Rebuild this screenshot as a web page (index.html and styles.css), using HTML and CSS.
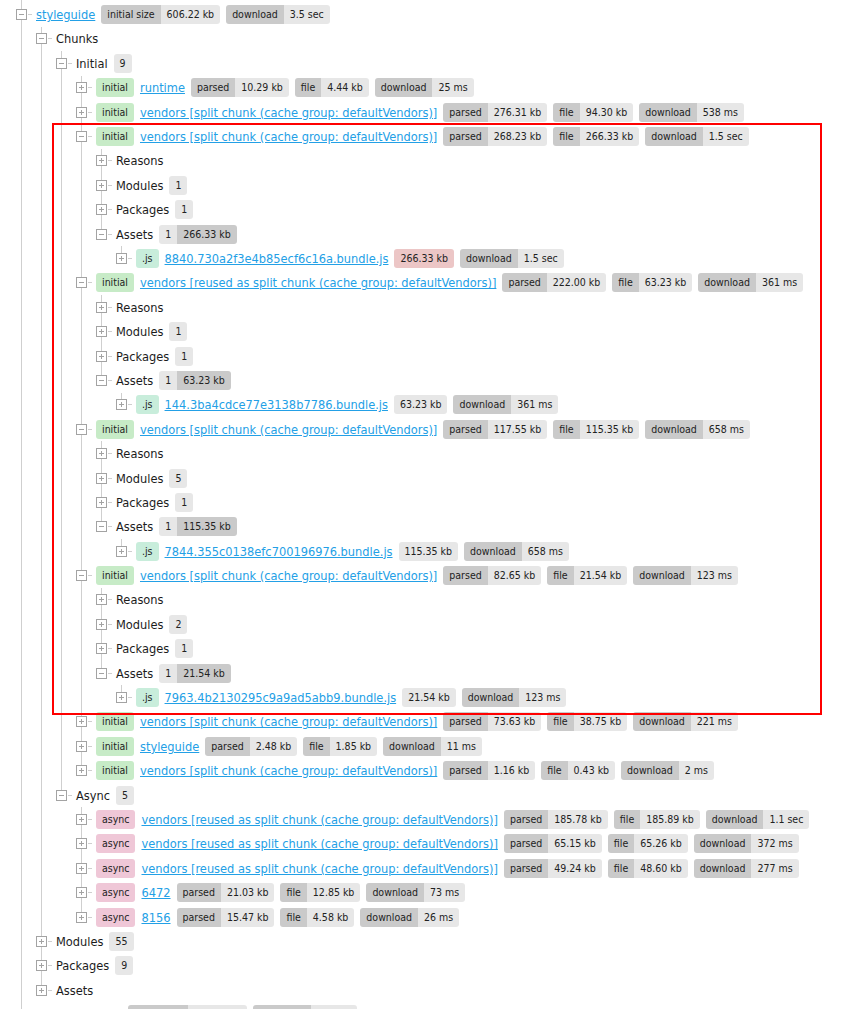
FILE: index.html
```html
<!DOCTYPE html>
<html lang="en">
<head>
    <meta charset="UTF-8">
    <meta name="viewport" content="width=device-width, initial-scale=1.0">
    <title>Statoscope - styleguide</title>
    <link rel="stylesheet" href="styles.css">
</head>
<body>
    <ul class="tree">
        <li>
            <div class="row"><span class="toggle open"></span><span class="dash"></span>
                <div class="cells">
                    <a href="#">styleguide</a>
                    <span class="badge"><span class="k">initial size</span><span class="v">606.22 kb</span></span>
                    <span class="badge"><span class="k">download</span><span class="v">3.5 sec</span></span>
                </div>
            </div>
            <ul>
                <li>
                    <div class="row"><span class="toggle open"></span><span class="dash"></span>
                        <div class="cells"><span class="label">Chunks</span></div>
                    </div>
                    <ul>
                        <li>
                            <div class="row"><span class="toggle open"></span><span class="dash"></span>
                                <div class="cells">
                                    <span class="label">Initial</span>
                                    <span class="badge"><span class="v">9</span></span>
                                </div>
                            </div>
                            <ul>
                                <li>
                                    <div class="row"><span class="toggle"></span><span class="dash"></span>
                                        <div class="cells">
                                            <span class="tag initial">initial</span>
                                            <a href="#">runtime</a>
                                            <span class="badge"><span class="k">parsed</span><span class="v">10.29 kb</span></span>
                                            <span class="badge"><span class="k">file</span><span class="v">4.44 kb</span></span>
                                            <span class="badge"><span class="k">download</span><span class="v">25 ms</span></span>
                                        </div>
                                    </div>
                                </li>
                                <li>
                                    <div class="row"><span class="toggle"></span><span class="dash"></span>
                                        <div class="cells">
                                            <span class="tag initial">initial</span>
                                            <a href="#">vendors [split chunk (cache group: defaultVendors)]</a>
                                            <span class="badge"><span class="k">parsed</span><span class="v">276.31 kb</span></span>
                                            <span class="badge"><span class="k">file</span><span class="v">94.30 kb</span></span>
                                            <span class="badge"><span class="k">download</span><span class="v">538 ms</span></span>
                                        </div>
                                    </div>
                                </li>
                                <li>
                                    <div class="row"><span class="toggle open"></span><span class="dash"></span>
                                        <div class="cells">
                                            <span class="tag initial">initial</span>
                                            <a href="#">vendors [split chunk (cache group: defaultVendors)]</a>
                                            <span class="badge"><span class="k">parsed</span><span class="v">268.23 kb</span></span>
                                            <span class="badge"><span class="k">file</span><span class="v">266.33 kb</span></span>
                                            <span class="badge"><span class="k">download</span><span class="v">1.5 sec</span></span>
                                        </div>
                                    </div>
                                    <ul>
                                        <li><div class="row"><span class="toggle"></span><span class="dash"></span><div class="cells"><span class="label">Reasons</span></div></div></li>
                                        <li><div class="row"><span class="toggle"></span><span class="dash"></span><div class="cells"><span class="label">Modules</span><span class="badge"><span class="v">1</span></span></div></div></li>
                                        <li><div class="row"><span class="toggle"></span><span class="dash"></span><div class="cells"><span class="label">Packages</span><span class="badge"><span class="v">1</span></span></div></div></li>
                                        <li>
                                            <div class="row"><span class="toggle open"></span><span class="dash"></span>
                                                <div class="cells">
                                                    <span class="label">Assets</span>
                                                    <span class="badge"><span class="v">1</span><span class="k">266.33 kb</span></span>
                                                </div>
                                            </div>
                                            <ul>
                                                <li>
                                                    <div class="row"><span class="toggle"></span><span class="dash"></span>
                                                        <div class="cells">
                                                            <span class="tag js">.js</span>
                                                            <a href="#">8840.730a2f3e4b85ecf6c16a.bundle.js</a>
                                                            <span class="badge"><span class="v alarm">266.33 kb</span></span>
                                                            <span class="badge"><span class="k">download</span><span class="v">1.5 sec</span></span>
                                                        </div>
                                                    </div>
                                                </li>
                                            </ul>
                                        </li>
                                    </ul>
                                </li>
                                <li>
                                    <div class="row"><span class="toggle open"></span><span class="dash"></span>
                                        <div class="cells">
                                            <span class="tag initial">initial</span>
                                            <a href="#">vendors [reused as split chunk (cache group: defaultVendors)]</a>
                                            <span class="badge"><span class="k">parsed</span><span class="v">222.00 kb</span></span>
                                            <span class="badge"><span class="k">file</span><span class="v">63.23 kb</span></span>
                                            <span class="badge"><span class="k">download</span><span class="v">361 ms</span></span>
                                        </div>
                                    </div>
                                    <ul>
                                        <li><div class="row"><span class="toggle"></span><span class="dash"></span><div class="cells"><span class="label">Reasons</span></div></div></li>
                                        <li><div class="row"><span class="toggle"></span><span class="dash"></span><div class="cells"><span class="label">Modules</span><span class="badge"><span class="v">1</span></span></div></div></li>
                                        <li><div class="row"><span class="toggle"></span><span class="dash"></span><div class="cells"><span class="label">Packages</span><span class="badge"><span class="v">1</span></span></div></div></li>
                                        <li>
                                            <div class="row"><span class="toggle open"></span><span class="dash"></span>
                                                <div class="cells">
                                                    <span class="label">Assets</span>
                                                    <span class="badge"><span class="v">1</span><span class="k">63.23 kb</span></span>
                                                </div>
                                            </div>
                                            <ul>
                                                <li>
                                                    <div class="row"><span class="toggle"></span><span class="dash"></span>
                                                        <div class="cells">
                                                            <span class="tag js">.js</span>
                                                            <a href="#">144.3ba4cdce77e3138b7786.bundle.js</a>
                                                            <span class="badge"><span class="v">63.23 kb</span></span>
                                                            <span class="badge"><span class="k">download</span><span class="v">361 ms</span></span>
                                                        </div>
                                                    </div>
                                                </li>
                                            </ul>
                                        </li>
                                    </ul>
                                </li>
                                <li>
                                    <div class="row"><span class="toggle open"></span><span class="dash"></span>
                                        <div class="cells">
                                            <span class="tag initial">initial</span>
                                            <a href="#">vendors [split chunk (cache group: defaultVendors)]</a>
                                            <span class="badge"><span class="k">parsed</span><span class="v">117.55 kb</span></span>
                                            <span class="badge"><span class="k">file</span><span class="v">115.35 kb</span></span>
                                            <span class="badge"><span class="k">download</span><span class="v">658 ms</span></span>
                                        </div>
                                    </div>
                                    <ul>
                                        <li><div class="row"><span class="toggle"></span><span class="dash"></span><div class="cells"><span class="label">Reasons</span></div></div></li>
                                        <li><div class="row"><span class="toggle"></span><span class="dash"></span><div class="cells"><span class="label">Modules</span><span class="badge"><span class="v">5</span></span></div></div></li>
                                        <li><div class="row"><span class="toggle"></span><span class="dash"></span><div class="cells"><span class="label">Packages</span><span class="badge"><span class="v">1</span></span></div></div></li>
                                        <li>
                                            <div class="row"><span class="toggle open"></span><span class="dash"></span>
                                                <div class="cells">
                                                    <span class="label">Assets</span>
                                                    <span class="badge"><span class="v">1</span><span class="k">115.35 kb</span></span>
                                                </div>
                                            </div>
                                            <ul>
                                                <li>
                                                    <div class="row"><span class="toggle"></span><span class="dash"></span>
                                                        <div class="cells">
                                                            <span class="tag js">.js</span>
                                                            <a href="#">7844.355c0138efc700196976.bundle.js</a>
                                                            <span class="badge"><span class="v">115.35 kb</span></span>
                                                            <span class="badge"><span class="k">download</span><span class="v">658 ms</span></span>
                                                        </div>
                                                    </div>
                                                </li>
                                            </ul>
                                        </li>
                                    </ul>
                                </li>
                                <li>
                                    <div class="row"><span class="toggle open"></span><span class="dash"></span>
                                        <div class="cells">
                                            <span class="tag initial">initial</span>
                                            <a href="#">vendors [split chunk (cache group: defaultVendors)]</a>
                                            <span class="badge"><span class="k">parsed</span><span class="v">82.65 kb</span></span>
                                            <span class="badge"><span class="k">file</span><span class="v">21.54 kb</span></span>
                                            <span class="badge"><span class="k">download</span><span class="v">123 ms</span></span>
                                        </div>
                                    </div>
                                    <ul>
                                        <li><div class="row"><span class="toggle"></span><span class="dash"></span><div class="cells"><span class="label">Reasons</span></div></div></li>
                                        <li><div class="row"><span class="toggle"></span><span class="dash"></span><div class="cells"><span class="label">Modules</span><span class="badge"><span class="v">2</span></span></div></div></li>
                                        <li><div class="row"><span class="toggle"></span><span class="dash"></span><div class="cells"><span class="label">Packages</span><span class="badge"><span class="v">1</span></span></div></div></li>
                                        <li>
                                            <div class="row"><span class="toggle open"></span><span class="dash"></span>
                                                <div class="cells">
                                                    <span class="label">Assets</span>
                                                    <span class="badge"><span class="v">1</span><span class="k">21.54 kb</span></span>
                                                </div>
                                            </div>
                                            <ul>
                                                <li>
                                                    <div class="row"><span class="toggle"></span><span class="dash"></span>
                                                        <div class="cells">
                                                            <span class="tag js">.js</span>
                                                            <a href="#">7963.4b2130295c9a9ad5abb9.bundle.js</a>
                                                            <span class="badge"><span class="v">21.54 kb</span></span>
                                                            <span class="badge"><span class="k">download</span><span class="v">123 ms</span></span>
                                                        </div>
                                                    </div>
                                                </li>
                                            </ul>
                                        </li>
                                    </ul>
                                </li>
                                <li>
                                    <div class="row"><span class="toggle"></span><span class="dash"></span>
                                        <div class="cells">
                                            <span class="tag initial">initial</span>
                                            <a href="#">vendors [split chunk (cache group: defaultVendors)]</a>
                                            <span class="badge"><span class="k">parsed</span><span class="v">73.63 kb</span></span>
                                            <span class="badge"><span class="k">file</span><span class="v">38.75 kb</span></span>
                                            <span class="badge"><span class="k">download</span><span class="v">221 ms</span></span>
                                        </div>
                                    </div>
                                </li>
                                <li>
                                    <div class="row"><span class="toggle"></span><span class="dash"></span>
                                        <div class="cells">
                                            <span class="tag initial">initial</span>
                                            <a href="#">styleguide</a>
                                            <span class="badge"><span class="k">parsed</span><span class="v">2.48 kb</span></span>
                                            <span class="badge"><span class="k">file</span><span class="v">1.85 kb</span></span>
                                            <span class="badge"><span class="k">download</span><span class="v">11 ms</span></span>
                                        </div>
                                    </div>
                                </li>
                                <li>
                                    <div class="row"><span class="toggle"></span><span class="dash"></span>
                                        <div class="cells">
                                            <span class="tag initial">initial</span>
                                            <a href="#">vendors [split chunk (cache group: defaultVendors)]</a>
                                            <span class="badge"><span class="k">parsed</span><span class="v">1.16 kb</span></span>
                                            <span class="badge"><span class="k">file</span><span class="v">0.43 kb</span></span>
                                            <span class="badge"><span class="k">download</span><span class="v">2 ms</span></span>
                                        </div>
                                    </div>
                                </li>
                            </ul>
                        </li>
                        <li>
                            <div class="row"><span class="toggle open"></span><span class="dash"></span>
                                <div class="cells">
                                    <span class="label">Async</span>
                                    <span class="badge"><span class="v">5</span></span>
                                </div>
                            </div>
                            <ul>
                                <li>
                                    <div class="row"><span class="toggle"></span><span class="dash"></span>
                                        <div class="cells">
                                            <span class="tag async">async</span>
                                            <a href="#">vendors [reused as split chunk (cache group: defaultVendors)]</a>
                                            <span class="badge"><span class="k">parsed</span><span class="v">185.78 kb</span></span>
                                            <span class="badge"><span class="k">file</span><span class="v">185.89 kb</span></span>
                                            <span class="badge"><span class="k">download</span><span class="v">1.1 sec</span></span>
                                        </div>
                                    </div>
                                </li>
                                <li>
                                    <div class="row"><span class="toggle"></span><span class="dash"></span>
                                        <div class="cells">
                                            <span class="tag async">async</span>
                                            <a href="#">vendors [reused as split chunk (cache group: defaultVendors)]</a>
                                            <span class="badge"><span class="k">parsed</span><span class="v">65.15 kb</span></span>
                                            <span class="badge"><span class="k">file</span><span class="v">65.26 kb</span></span>
                                            <span class="badge"><span class="k">download</span><span class="v">372 ms</span></span>
                                        </div>
                                    </div>
                                </li>
                                <li>
                                    <div class="row"><span class="toggle"></span><span class="dash"></span>
                                        <div class="cells">
                                            <span class="tag async">async</span>
                                            <a href="#">vendors [reused as split chunk (cache group: defaultVendors)]</a>
                                            <span class="badge"><span class="k">parsed</span><span class="v">49.24 kb</span></span>
                                            <span class="badge"><span class="k">file</span><span class="v">48.60 kb</span></span>
                                            <span class="badge"><span class="k">download</span><span class="v">277 ms</span></span>
                                        </div>
                                    </div>
                                </li>
                                <li>
                                    <div class="row"><span class="toggle"></span><span class="dash"></span>
                                        <div class="cells">
                                            <span class="tag async">async</span>
                                            <a href="#">6472</a>
                                            <span class="badge"><span class="k">parsed</span><span class="v">21.03 kb</span></span>
                                            <span class="badge"><span class="k">file</span><span class="v">12.85 kb</span></span>
                                            <span class="badge"><span class="k">download</span><span class="v">73 ms</span></span>
                                        </div>
                                    </div>
                                </li>
                                <li>
                                    <div class="row"><span class="toggle"></span><span class="dash"></span>
                                        <div class="cells">
                                            <span class="tag async">async</span>
                                            <a href="#">8156</a>
                                            <span class="badge"><span class="k">parsed</span><span class="v">15.47 kb</span></span>
                                            <span class="badge"><span class="k">file</span><span class="v">4.58 kb</span></span>
                                            <span class="badge"><span class="k">download</span><span class="v">26 ms</span></span>
                                        </div>
                                    </div>
                                </li>
                            </ul>
                        </li>
                    </ul>
                </li>
                <li><div class="row"><span class="toggle"></span><span class="dash"></span><div class="cells"><span class="label">Modules</span><span class="badge"><span class="v">55</span></span></div></div></li>
                <li><div class="row"><span class="toggle"></span><span class="dash"></span><div class="cells"><span class="label">Packages</span><span class="badge"><span class="v">9</span></span></div></div></li>
                <li><div class="row"><span class="toggle"></span><span class="dash"></span><div class="cells"><span class="label">Assets</span></div></div></li>
            </ul>
        </li>
        <li>
            <div class="row"><span class="toggle"></span><span class="dash"></span>
                <div class="cells">
                    <a href="#">documentation</a>
                    <span class="badge"><span class="k">initial size</span><span class="v">412.08 kb</span></span>
                    <span class="badge"><span class="k">download</span><span class="v">2.4 sec</span></span>
                </div>
            </div>
        </li>
    </ul>

    <div class="highlight"></div>
</body>
</html>
```

FILE: styles.css
```css
:root {
    --line-color: #cfcfcf;
    --toggle-color: #a3a3a3;
    --link-color: #23a0e6;
    --badge-key: #cacaca;
    --badge-value: #e7e7e7;
}

html {
    overflow: hidden;
}

body {
    margin: 0;
    padding-top: 2.4px;
    font-family: "DejaVu Sans Condensed", "Liberation Sans", sans-serif;
    font-size: 12.7px;
    color: #1c1c1c;
    background: white;
}

a {
    color: var(--link-color);
    text-decoration: underline;
    white-space: nowrap;
}

.tree,
.tree ul {
    list-style: none;
    margin: 0;
    padding: 0;
}

.tree ul {
    padding-left: 20px;
}

.tree li {
    position: relative;
}

/* sibling connector */
.tree li::before {
    content: '';
    position: absolute;
    left: 21px;
    top: 0;
    bottom: 0;
    border-left: 1px solid var(--line-color);
}

.tree li:last-child::before {
    bottom: auto;
    height: 12px;
}

.tree > li::before {
    top: -4px;
}

.row {
    display: flex;
    align-items: center;
    height: 24.4px;
    padding-left: 16px;
}

.toggle {
    position: relative;
    z-index: 1;
    box-sizing: border-box;
    flex: none;
    width: 11px;
    height: 11px;
    border: 1px solid var(--toggle-color);
    background: white;
}

.toggle::before,
.toggle::after {
    content: '';
    position: absolute;
    background: var(--toggle-color);
}

.toggle::before {
    left: 2px;
    top: 4px;
    width: 5px;
    height: 1px;
}

.toggle::after {
    left: 4px;
    top: 2px;
    width: 1px;
    height: 5px;
}

.toggle.open::after {
    display: none;
}

.dash {
    flex: none;
    width: 4px;
    height: 1px;
    margin: 0 4px 0 1px;
    background: var(--line-color);
}

.cells {
    display: flex;
    align-items: center;
    gap: 6px;
    white-space: nowrap;
}

.badge,
.tag {
    display: inline-flex;
    height: 19px;
    line-height: 19px;
    border-radius: 3px;
    overflow: hidden;
    font-size: 10.5px;
    color: #222;
}

.badge .k,
.badge .v,
.tag {
    padding: 0 6px;
}

.badge .k {
    background: var(--badge-key);
}

.badge .v {
    background: var(--badge-value);
}

.badge .v.alarm {
    background: #ecc6c6;
}

.tag.initial {
    background: #c7ebc7;
}

.tag.async {
    background: #efc7d7;
}

.tag.js {
    background: #c8eddb;
}

/* annotation frame drawn over the tree */
.highlight {
    position: absolute;
    left: 52px;
    top: 123px;
    width: 766px;
    height: 588px;
    border: 2px solid #f00;
    pointer-events: none;
}
```
